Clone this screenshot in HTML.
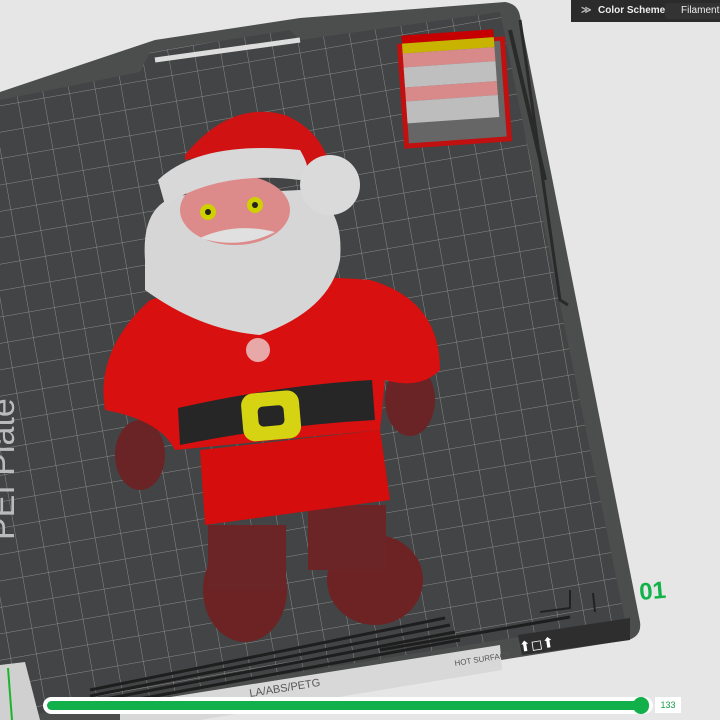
<!DOCTYPE html>
<html><head><style>
html,body{margin:0;padding:0;width:720px;height:720px;overflow:hidden;background:#e6e6e6;font-family:"Liberation Sans",sans-serif}
</style></head><body>
<svg width="720" height="720" viewBox="0 0 720 720" style="position:absolute;left:0;top:0">
<defs>
<pattern id="g" width="26" height="26" patternUnits="userSpaceOnUse" patternTransform="rotate(-10)">
<rect width="26" height="26" fill="#434445"/>
<path d="M0 0H26M0 0V26" stroke="#8a8a8a" stroke-width="1"/>
</pattern>
<clipPath id="cp"><path d="M0 100 L140 72 L150 52 L290 30 L300 40 L500 12 L625 620 L0 720Z"/></clipPath>
</defs>
<path d="M0 92 L140 45 L155 40 L300 18 L505 2 Q518 4 520 16 L640 622 Q642 636 628 640 L120 720 L0 720Z" fill="#4c4d4d"/>
<rect x="0" y="0" width="720" height="720" fill="url(#g)" clip-path="url(#cp)"/>
<path d="M520 20 L560 300 L568 305" stroke="#2a2a2a" stroke-width="3" fill="none"/>
<path d="M510 30 L545 180" stroke="#2a2a2a" stroke-width="4" fill="none"/>
<path d="M155 60 L300 40" stroke="#ddd" stroke-width="5"/>
<path d="M120 705 L500 645 L502 670 L200 720 L120 720Z" fill="#d8d8d8"/>
<path d="M518 635 L630 618 L630 640 L522 655Z" fill="#2e2e2e"/>
<text x="520" y="652" font-size="14" fill="#fff" transform="rotate(-9 520 652)">⬆◻⬆</text>
<text x="455" y="666" font-size="8" fill="#555" transform="rotate(-9 455 666)">HOT SURFACE</text>
<text x="250" y="697" font-size="11" fill="#555" transform="rotate(-9 250 697)">LA/ABS/PETG</text>
<g stroke="#1e1e1e" stroke-width="3">
<line x1="90" y1="690" x2="445" y2="618"/><line x1="90" y1="696" x2="450" y2="625"/><line x1="90" y1="702" x2="455" y2="632"/><line x1="90" y1="708" x2="460" y2="640"/>
<line x1="380" y1="650" x2="570" y2="617"/>
</g>
<path d="M540 612 L570 608 L570 590 M595 612 L593 593" stroke="#222" stroke-width="2" fill="none"/>
<path d="M0 665 L25 662 L40 720 L0 720Z" fill="#d0d0d0"/>
<line x1="8" y1="668" x2="12" y2="720" stroke="#1bb52b" stroke-width="2"/>
<text x="14" y="540" font-size="34" fill="#bbb" transform="rotate(-90 14 540)" font-weight="300">PEI Plate</text>
<text x="640" y="600" font-size="24" font-weight="bold" fill="#12b24a" transform="rotate(-5 640 600)">01</text>
<g transform="rotate(-4 455 85)">
<rect x="400" y="40" width="108" height="105" fill="#c01010"/>
<rect x="405" y="44" width="98" height="96" fill="#666"/>
<rect x="405" y="32" width="92" height="8" fill="#c60000"/>
<rect x="405" y="40" width="92" height="10" fill="#c8b400"/>
<rect x="405" y="50" width="92" height="14" fill="#d88a8a"/>
<rect x="405" y="64" width="92" height="20" fill="#bfbfbf"/>
<rect x="405" y="84" width="92" height="14" fill="#d88a8a"/>
<rect x="405" y="98" width="92" height="22" fill="#bdbdbd"/>
</g>
<g>
<ellipse cx="245" cy="590" rx="42" ry="52" fill="#6d2324"/>
<ellipse cx="375" cy="580" rx="48" ry="45" fill="#6d2324"/>
<rect x="208" y="525" width="78" height="65" fill="#6b2526"/>
<rect x="308" y="505" width="78" height="65" fill="#6b2526"/>
<ellipse cx="140" cy="455" rx="25" ry="35" fill="#6a2426"/>
<ellipse cx="410" cy="400" rx="25" ry="36" fill="#6a2426"/>
<path d="M200 450 L380 430 L390 500 L205 525Z" fill="#d50d0d"/>
<path d="M150 300 Q250 270 370 280 Q440 300 440 370 Q420 390 385 380 L380 430 L175 450 Q160 420 105 410 Q95 350 150 300Z" fill="#d8100f"/>
<path d="M178 408 Q280 385 372 380 L375 420 Q280 425 180 445Z" fill="#262626"/>
<rect x="242" y="392" width="58" height="48" rx="12" fill="#d6d313" transform="rotate(-5 270 415)"/>
<rect x="258" y="406" width="26" height="20" rx="5" fill="#262626" transform="rotate(-5 270 415)"/>
<circle cx="258" cy="350" r="12" fill="#e8a8a8"/>
<path d="M145 260 Q140 190 200 195 L300 190 Q345 200 340 260 Q330 310 260 335 Q200 330 145 290Z" fill="#d6d6d6"/>
<ellipse cx="235" cy="210" rx="55" ry="35" fill="#dd8a8a"/>
<circle cx="208" cy="212" r="8" fill="#cfd000"/><circle cx="255" cy="205" r="8" fill="#cfd000"/>
<circle cx="208" cy="212" r="3" fill="#222"/><circle cx="255" cy="205" r="3" fill="#222"/>
<path d="M200 238 Q235 222 275 232 Q240 250 200 238Z" fill="#e0e0e0"/>
<path d="M185 155 Q230 100 285 115 Q320 130 330 165 L300 170 Q230 150 185 160Z" fill="#d11212"/>
<path d="M158 180 Q200 140 300 150 Q315 175 300 180 Q220 170 165 205Z" fill="#d8d8d8"/>
<circle cx="330" cy="185" r="30" fill="#dadada"/>
</g>
</svg>
<div style="position:absolute;left:571px;top:0;width:149px;height:22px;background:#2b2b2b;color:#eee;font-size:10px;font-weight:bold;line-height:22px">
<span style="position:absolute;left:10px;color:#bbb">≫</span>
<span style="position:absolute;left:27px">Color Scheme</span>
<span style="position:absolute;left:94px;top:3px;height:16px;width:60px;background:#333;border-radius:3px;line-height:16px;font-weight:normal;padding-left:16px">Filament</span>
</div>
<div style="position:absolute;left:43px;top:697px;width:610px;height:17px;background:#fff;border-radius:9px"></div>
<div style="position:absolute;left:47px;top:701px;width:596px;height:9px;background:#12b04a;border-radius:5px"></div>
<div style="position:absolute;left:633px;top:697px;width:16px;height:17px;background:#12b04a;border-radius:8px"></div>
<div style="position:absolute;left:655px;top:697px;width:26px;height:16px;background:#fff;color:#12a04a;font-size:9px;line-height:16px;text-align:center">133</div>
</body></html>
